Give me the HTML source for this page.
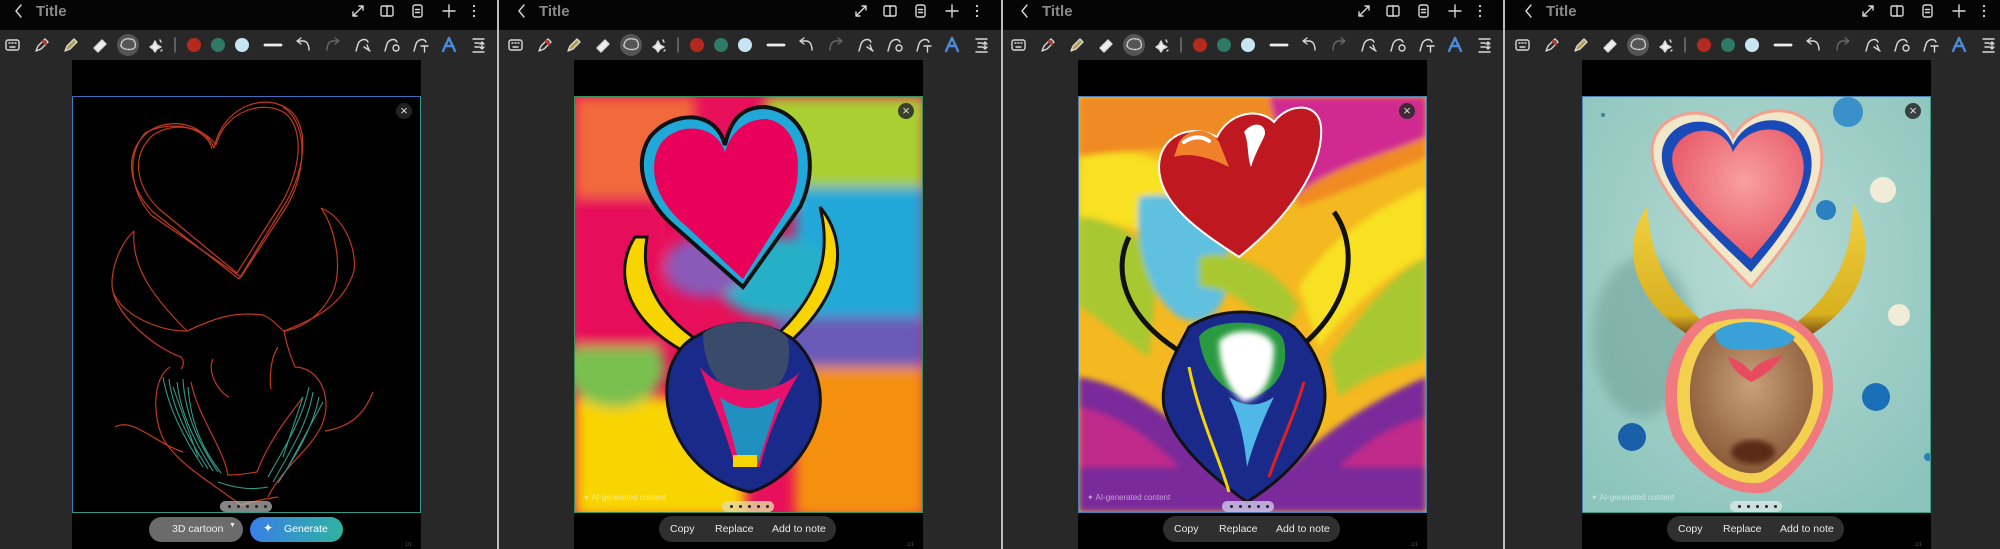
<!DOCTYPE html>
<html><head><meta charset="utf-8">
<style>
*{margin:0;padding:0;box-sizing:border-box}
body{width:2000px;height:549px;background:#262626;position:relative;overflow:hidden;font-family:"Liberation Sans",sans-serif}
.p{position:absolute;top:0;width:502px;height:549px;background:#282828;overflow:hidden}
.sep{position:absolute;top:0;width:2px;height:549px;background:#bdbdbd;z-index:5}
.hd{position:absolute;left:0;top:0;width:100%;height:30px;background:#050505}
.tb{position:absolute;left:0;top:30px;width:100%;height:30px;background:#282828}
.title{position:absolute;left:36px;top:3px;font-size:15px;color:#8a8a8a;font-weight:bold}
.col{position:absolute;left:72px;top:60px;width:349px;height:489px;background:#000}
.img{position:absolute;left:72px;top:96px;width:349px;height:417px;overflow:hidden;border:1px solid #3a7fbf}
.img svg{display:block}
.x{position:absolute;left:396px;top:103px;width:16px;height:16px;border-radius:50%;background:rgba(40,40,40,.85);color:#ddd;font-size:13px;line-height:16px;text-align:center}
.dots{position:absolute;left:220px;top:501px;width:52px;height:11px;border-radius:6px;background:rgba(200,200,200,.75)}
.dots i{position:absolute;top:4px;width:3px;height:3px;border-radius:50%;background:#222}
.pill{position:absolute;left:157px;top:516px;width:177px;height:26px;border-radius:13px;background:#2f2f2f;color:#e8e8e8;font-size:10.5px}
.pill span{position:absolute;top:7px}
.ai{position:absolute;left:8px;bottom:10px;font-size:8px;color:rgba(255,255,255,.55)}
.pg{position:absolute;left:405px;top:542px;font-size:5px;color:#555}
</style></head><body>
<svg width="0" height="0" style="position:absolute">
<defs>
<symbol id="bar" viewBox="0 0 497 60">
<g fill="none" stroke="#d8d8d8" stroke-width="1.4" stroke-linecap="round" stroke-linejoin="round">
<path d="M21 5 L16 11 L21 17"/>
<path d="M353 16 L363 6 M353 12 V16 H357 M359 6 H363 V10"/>
<rect x="381" y="6" width="12" height="10" rx="1.5"/><path d="M387 6 V16"/>
<rect x="413" y="5" width="9" height="12" rx="2"/><path d="M415.5 9.5 H419.5 M415.5 12.5 H419.5"/>
<path d="M449 5 V17 M443 11 H455"/>
<rect x="6" y="40" width="13" height="10" rx="2"/><path d="M9 43h1M12 43h1M15 43h1M10 47h5"/>
<path d="M36 51 L38 46 L45 39 L48 42 L41 49 Z" /><path d="M43 41 L46 44" stroke="#c0392b" stroke-width="2.5"/>
<path d="M65 51 L67 46 L74 39 L77 42 L70 49 Z" fill="#b59a48" stroke="#d8d8d8"/>
<path d="M94 48 L102 40 L106 44 L98 52 Z" fill="#eee"/>
<circle cx="128" cy="45" r="11" fill="#555" stroke="none"/>
<path d="M121 46 C121 40 126 38 130 39 C135 39 136 44 135 47 C134 50 124 51 121 46 Z" stroke-dasharray="1.5 1.5"/>
<path d="M155 41 L157 45 L161 47 L157 49 L155 52 L153 49 L150 47 L153 45 Z M160 40 L161 42 M162 50 L161 51" fill="#eee"/>
<path d="M175 38 V52" stroke="#777"/>
<circle cx="194" cy="45" r="7" fill="#b22a1e" stroke="none"/>
<circle cx="218" cy="45" r="7" fill="#2e7a64" stroke="none"/>
<circle cx="242" cy="45" r="7" fill="#c8e6f2" stroke="none"/>
<path d="M265 45 H281" stroke="#eee" stroke-width="2.8"/>
<path d="M297 41 L301 38 M297 41 L301 44 M297 41 H303 C307 41 309 45 309 50"/>
<path d="M339 41 L335 38 M339 41 L335 44 M339 41 H333 C329 41 327 45 327 50" stroke="#666"/>
<path d="M356 51 L358 44 C360 39 366 38 368 42 M364 47 L370 51 M367 45 L369 50" />
<path d="M385 51 L387 44 C389 39 395 38 397 42"/><circle cx="396" cy="48" r="3"/>
<path d="M414 51 L416 44 C418 39 424 38 426 42 M421 46 H428 M424.5 46 V52"/>
<path d="M449 38 L443 51 M449 38 L455 51 M445 46 H453" stroke="#4a8ad8" stroke-width="2.4"/>
<path d="M473 39 H484 M473 52 H484 M475 43 H479 M475 47 H479 M482 42 V49 M480 44 L482 42 L484 44 M480 47 L482 49 L484 47"/>
</g>
<circle cx="474" cy="6" r="1.1" fill="#ddd"/><circle cx="474" cy="11" r="1.1" fill="#ddd"/><circle cx="474" cy="16" r="1.1" fill="#ddd"/>
</symbol>
<filter id="bl" x="-20%" y="-20%" width="140%" height="140%"><feGaussianBlur stdDeviation="6"/></filter>
<filter id="bl2"><feGaussianBlur stdDeviation="3"/></filter>
</defs>
</svg>

<!-- PANEL 1 -->
<div class="p" style="left:0">
<div class="hd"></div><div class="tb"></div>
<svg style="position:absolute;left:0;top:0" width="497" height="60"><use href="#bar"/></svg>
<div class="title">Title</div>
<div class="col"></div>
<div class="img" style="border-color:#3a6fbf #2f9a8a #2f9a8a #3a7fbf">
<svg width="347" height="415" viewBox="0 0 347 415"><rect width="347" height="415" fill="#000"/>
<g fill="none" stroke="#c0391f" stroke-width="1.2">
<path d="M141 51 C130 25 95 20 75 35 C50 55 55 90 80 115 L166 182 L210 110 C230 80 240 30 215 12 C190 -5 150 10 141 51"/>
<path d="M143 48 C128 28 100 25 80 38 C58 58 62 88 86 112 L164 176 L206 110 C226 80 234 34 212 16 C190 2 152 14 143 48"/>
<path d="M139 52 C134 30 98 22 72 36 C54 58 56 92 78 118 L168 180 L212 112 C232 82 238 28 210 10"/>
<path d="M61 134 C44 150 36 180 40 195 C50 220 90 235 114 234 C140 222 160 214 190 218 C200 222 205 230 211 234 C240 222 270 210 281 174 C284 150 270 120 248 111"/>
<path d="M61 134 C58 170 80 200 114 234"/><path d="M248 111 C262 130 270 170 260 195 C250 214 235 230 211 234"/>
<path d="M40 195 C46 220 80 250 108 260 C112 264 110 270 108 272"/>
<path d="M211 234 C214 250 218 260 222 270 C245 270 262 300 248 330 C235 355 210 370 195 400"/>
<path d="M97 270 C80 280 78 320 92 345 C110 370 130 380 168 408 C178 405 190 402 205 400"/>
<path d="M140 262 C134 275 145 295 156 300 M205 250 C198 260 196 280 198 292"/>
<path d="M42 330 C60 320 80 345 110 355 M252 334 C275 330 290 320 300 295"/>
<path d="M118 285 C125 320 150 350 155 378 C165 378 178 376 184 375 C195 345 215 320 230 300"/>
</g>
<g fill="none" stroke="#2f9a88" stroke-width="1.1">
<path d="M90 280 C95 310 110 340 130 370 M96 282 C100 315 118 345 135 372 M104 285 C108 320 125 350 140 374 M100 290 L125 360 M110 282 C112 320 128 350 145 375 M115 290 C118 330 132 355 148 376"/>
<path d="M236 290 C230 320 215 345 195 380 M240 295 C235 325 220 350 200 385 M246 300 C240 330 225 355 205 386 M230 300 L210 360 M250 305 L215 370"/>
<path d="M145 385 C165 392 180 393 195 390"/>
</g>
</svg></div>
<div class="x">×</div>
<div class="dots" style="background:rgba(190,190,190,.7)"><i style="left:8px"></i><i style="left:17px"></i><i style="left:26px"></i><i style="left:35px"></i><i style="left:44px"></i></div>
<div style="position:absolute;left:149px;top:517px;width:94px;height:25px;border-radius:13px;background:#6b6b6b;color:#eee;font-size:10.5px"><span style="position:absolute;left:23px;top:6px">3D cartoon</span><span style="position:absolute;left:80px;top:5px;font-size:7px">▼</span></div>
<div style="position:absolute;left:250px;top:517px;width:93px;height:25px;border-radius:13px;background:linear-gradient(90deg,#3a7fe8,#2fb3a0);color:#fff;font-size:10.5px"><span style="position:absolute;left:13px;top:4px;font-size:12px">✦</span><span style="position:absolute;left:34px;top:6px">Generate</span></div>
<div class="pg">1/1</div>
</div>
<div class="sep" style="left:497px"></div>

<!-- PANEL 2 -->
<div class="p" style="left:499px">
<div class="hd"></div><div class="tb"></div>
<svg style="position:absolute;left:4px;top:0" width="497" height="60"><use href="#bar"/></svg>
<div class="title" style="left:40px">Title</div>
<div class="col" style="left:75px"></div>
<div class="img" style="left:75px;border-color:#3a8f5f">
<svg width="347" height="415" viewBox="0 0 347 415">
<rect width="347" height="415" fill="#e8105a"/>
<g filter="url(#bl)">
<rect x="0" y="0" width="120" height="100" fill="#f06a3a"/>
<rect x="190" y="0" width="160" height="110" fill="#a8d030"/>
<rect x="220" y="90" width="130" height="140" fill="#20a8d8"/>
<rect x="200" y="220" width="150" height="70" fill="#6a5ab8"/>
<rect x="220" y="270" width="130" height="150" fill="#f49010"/>
<rect x="0" y="300" width="170" height="120" fill="#f8d400"/>
<ellipse cx="40" cy="270" rx="50" ry="40" fill="#7ac050"/>
<ellipse cx="200" cy="180" rx="60" ry="40" fill="#28b0c8"/>
<ellipse cx="130" cy="170" rx="40" ry="30" fill="#8a5ab8"/>
<rect x="0" y="100" width="90" height="150" fill="#e8105a"/>
</g>
<path d="M150 48 C140 10 95 15 75 40 C55 70 75 110 100 130 L168 190 L225 110 C245 70 235 15 190 10 C165 10 155 25 150 48Z" fill="#20a8d8" stroke="#111" stroke-width="4"/>
<path d="M150 55 C140 25 100 25 85 48 C70 75 85 108 110 128 L168 182 L215 108 C230 75 225 28 192 22 C170 22 156 35 150 55Z" fill="#e8005a"/>
<path d="M60 140 C40 170 45 220 110 255 L125 245 C80 215 65 180 72 140Z" fill="#f8d400" stroke="#111" stroke-width="3"/>
<path d="M245 110 C270 140 275 190 215 245 L205 235 C250 190 255 150 245 110Z" fill="#f8d400" stroke="#111" stroke-width="3"/>
<path d="M120 240 C100 250 85 280 95 320 C110 370 150 390 175 395 C210 385 240 350 245 310 C248 280 230 250 215 240 C185 222 150 222 120 240Z" fill="#1a2a8a" stroke="#111" stroke-width="3"/>
<path d="M128 236 C150 220 195 222 212 240 C220 270 205 300 175 300 C150 300 128 275 128 236Z" fill="#3a4a6a"/>
<path d="M125 270 C135 300 150 330 160 370 L185 370 C195 330 210 300 225 275 C200 300 150 300 125 270Z" fill="#e8106a"/>
<path d="M145 300 C155 330 160 350 165 370 L182 370 C188 350 195 330 205 300 C185 315 165 315 145 300Z" fill="#2090c0"/>
<rect x="158" y="358" width="24" height="12" fill="#f8d400"/>
</svg>
<div class="ai">✦ AI-generated content</div></div>
<div class="x" style="left:399px">×</div>
<div class="dots" style="left:223px;background:rgba(230,220,160,.8)"><i style="left:8px"></i><i style="left:17px"></i><i style="left:26px"></i><i style="left:35px"></i><i style="left:44px"></i></div>
<div class="pill" style="left:160px"><span style="left:11px">Copy</span><span style="left:56px">Replace</span><span style="left:113px">Add to note</span></div>
<div class="pg" style="left:408px">1/1</div>
</div>
<div class="sep" style="left:1001px"></div>

<!-- PANEL 3 -->
<div class="p" style="left:1003px">
<div class="hd"></div><div class="tb"></div>
<svg style="position:absolute;left:3px;top:0" width="497" height="60"><use href="#bar"/></svg>
<div class="title" style="left:39px">Title</div>
<div class="col" style="left:75px"></div>
<div class="img" style="left:75px;border-color:#4a7fb0">
<svg width="347" height="415" viewBox="0 0 347 415">
<rect width="347" height="415" fill="#f4b820"/>
<g filter="url(#bl2)">
<path d="M0 0 H347 V60 C300 80 250 100 220 110 C200 60 120 40 0 60Z" fill="#f08a20"/>
<path d="M190 0 H347 V40 C300 60 250 70 215 100 Z" fill="#d02a90"/>
<path d="M0 60 C60 50 80 60 100 80 L100 150 C60 130 20 120 0 130Z" fill="#f8e020"/>
<path d="M0 120 C30 120 60 140 80 160 L70 260 C40 240 20 220 0 210Z" fill="#a8c830"/>
<path d="M347 90 C300 110 250 140 220 190 L240 250 C280 200 320 170 347 160Z" fill="#f8e020"/>
<path d="M347 160 C310 180 280 220 250 260 L260 300 C300 270 330 270 347 260Z" fill="#a8c830"/>
<path d="M60 100 C110 90 150 120 150 170 C150 220 120 230 100 220 C70 200 55 150 60 100Z" fill="#60c0e0"/>
<path d="M120 160 C150 150 200 170 220 210 L200 240 C170 200 140 190 120 190Z" fill="#a8c830"/>
<path d="M0 280 C60 290 100 330 140 360 L130 415 H0Z" fill="#7a2a9a"/>
<path d="M0 310 C50 320 80 350 110 380 L90 415 H0Z" fill="#c02a8a"/>
<path d="M347 280 C300 300 250 330 210 370 L230 415 H347Z" fill="#7a2a9a"/>
<path d="M347 320 C300 330 270 360 240 390 L250 415 H347Z" fill="#c02a8a"/>
<rect x="0" y="370" width="347" height="45" fill="#7a2a9a"/>
</g>
<path d="M128 40 C140 15 170 10 185 25 C200 5 230 5 232 30 C235 70 200 120 150 160 C120 140 70 110 70 70 C70 40 100 25 128 40Z" fill="#c01820" stroke="#fff" stroke-width="2" transform="translate(10,0)"/>
<path d="M100 45 C110 30 130 30 140 45 L150 70 C130 60 110 55 95 60Z" fill="#f0802a"/>
<path d="M165 35 C175 22 190 28 185 40 C180 50 175 60 172 70 C168 60 170 45 165 35Z" fill="#fff"/>
<path d="M105 45 C115 38 125 40 130 44" stroke="#fff" stroke-width="4" fill="none" stroke-linecap="round"/>
<path d="M50 140 C35 170 40 220 110 260 M255 115 C280 150 275 210 215 255" fill="none" stroke="#111" stroke-width="5"/>
<path d="M110 230 C100 250 80 280 85 310 C95 350 140 385 168 405 C200 385 240 350 245 310 C250 280 235 250 215 230 C185 210 140 210 110 230Z" fill="#1a2a8a" stroke="#111" stroke-width="3"/>
<path d="M120 240 C130 220 200 220 205 245 C210 270 200 290 175 300 C150 300 125 280 120 240Z" fill="#2a9a40"/>
<path d="M140 245 C150 230 190 230 195 250 C195 280 185 300 165 305 C150 295 140 270 140 245Z" fill="#fff" filter="url(#bl2)"/>
<path d="M150 300 C160 320 165 340 168 370 C175 345 185 320 195 300 C180 310 165 310 150 300Z" fill="#50b8e8"/>
<path d="M110 270 C120 320 140 360 150 395" fill="none" stroke="#f8d400" stroke-width="3"/>
<path d="M225 285 C215 320 200 350 190 380" fill="none" stroke="#e02020" stroke-width="3"/>
</svg>
<div class="ai">✦ AI-generated content</div></div>
<div class="x" style="left:396px">×</div>
<div class="dots" style="left:219px;background:rgba(200,190,230,.85)"><i style="left:8px"></i><i style="left:17px"></i><i style="left:26px"></i><i style="left:35px"></i><i style="left:44px"></i></div>
<div class="pill" style="left:160px"><span style="left:11px">Copy</span><span style="left:56px">Replace</span><span style="left:113px">Add to note</span></div>
<div class="pg" style="left:408px">1/1</div>
</div>
<div class="sep" style="left:1503px"></div>

<!-- PANEL 4 -->
<div class="p" style="left:1505px">
<div class="hd"></div><div class="tb"></div>
<svg style="position:absolute;left:5px;top:0" width="497" height="60"><use href="#bar"/></svg>
<div class="title" style="left:41px">Title</div>
<div class="col" style="left:77px"></div>
<div class="img" style="left:77px;border-color:#4a7fb0 #3a9f8a #3a9f8a #4a7fb0">
<svg width="347" height="415" viewBox="0 0 347 415">
<defs><radialGradient id="mint" cx="50%" cy="40%" r="70%"><stop offset="0" stop-color="#b8dcd4"/><stop offset="1" stop-color="#8cc4bc"/></radialGradient>
<radialGradient id="pk" cx="55%" cy="40%" r="60%"><stop offset="0" stop-color="#f8a0a0"/><stop offset="1" stop-color="#e85a6a"/></radialGradient>
<linearGradient id="hn" x1="0" y1="0" x2="0" y2="1"><stop offset="0" stop-color="#f0d040"/><stop offset=".8" stop-color="#d8b020"/><stop offset="1" stop-color="#5a2a10"/></linearGradient>
<radialGradient id="br" cx="50%" cy="40%" r="60%"><stop offset="0" stop-color="#c8a078"/><stop offset="1" stop-color="#8a5a38"/></radialGradient></defs>
<rect width="347" height="415" fill="url(#mint)"/>
<ellipse cx="60" cy="240" rx="50" ry="80" fill="#6a9a92" opacity=".5" filter="url(#bl)"/>
<circle cx="265" cy="15" r="15" fill="#3a90c8"/><circle cx="300" cy="93" r="13" fill="#f0ecd8"/><circle cx="243" cy="113" r="10" fill="#2a80c0"/>
<circle cx="316" cy="218" r="11" fill="#f0ecd8"/><circle cx="293" cy="300" r="14" fill="#1a70b8"/><circle cx="49" cy="340" r="14" fill="#1a60a8"/><circle cx="20" cy="18" r="2" fill="#3a80a8"/><circle cx="345" cy="360" r="4" fill="#2a80b8"/>
<path d="M150 40 C135 5 80 10 70 45 C62 80 100 120 168 190 C220 130 250 80 235 40 C222 5 170 5 150 40Z" fill="#f0e8c8" stroke="#f4a090" stroke-width="3"/>
<path d="M150 48 C138 15 90 18 80 50 C72 80 105 115 168 175 C215 120 238 80 225 48 C212 15 165 15 150 48Z" fill="#1a4ab8"/>
<path d="M150 55 C140 25 100 28 90 55 C84 82 112 112 168 162 C210 115 228 82 218 55 C208 25 165 25 150 55Z" fill="url(#pk)"/>
<path d="M64 110 C35 150 50 210 118 245 L130 232 C85 200 68 160 64 110Z" fill="url(#hn)"/>
<path d="M270 105 C295 150 285 210 215 245 L205 232 C250 200 270 160 270 105Z" fill="url(#hn)"/>
<path d="M120 220 C90 240 70 290 90 340 C120 390 160 400 185 395 C215 380 250 330 250 290 C250 250 225 225 195 215 C170 210 140 210 120 220Z" fill="#f07a80"/>
<path d="M125 228 C100 245 85 290 100 335 C125 380 160 390 180 385 C210 370 240 330 240 292 C240 255 220 232 195 225 C170 220 145 220 125 228Z" fill="#f4d050"/>
<path d="M132 235 C110 255 100 290 112 330 C130 370 160 380 178 375 C205 360 230 325 230 292 C230 260 212 240 192 232 C170 228 150 228 132 235Z" fill="url(#br)"/>
<path d="M132 235 C150 220 190 222 212 240 C205 255 175 252 150 252 C140 252 132 245 132 235Z" fill="#3aa0d8"/>
<path d="M145 260 C150 275 160 280 168 285 C180 280 190 272 200 258 C185 262 175 265 168 275 C160 265 152 262 145 260Z" fill="#e84a60"/>
<ellipse cx="170" cy="355" rx="22" ry="12" fill="#5a2a18" filter="url(#bl2)"/>
</svg>
<div class="ai">✦ AI-generated content</div></div>
<div class="x" style="left:400px">×</div>
<div class="dots" style="left:225px;background:rgba(220,230,230,.8)"><i style="left:8px"></i><i style="left:17px"></i><i style="left:26px"></i><i style="left:35px"></i><i style="left:44px"></i></div>
<div class="pill" style="left:162px"><span style="left:11px">Copy</span><span style="left:56px">Replace</span><span style="left:113px">Add to note</span></div>
<div class="pg" style="left:410px">1/1</div>
</div>
</body></html>
